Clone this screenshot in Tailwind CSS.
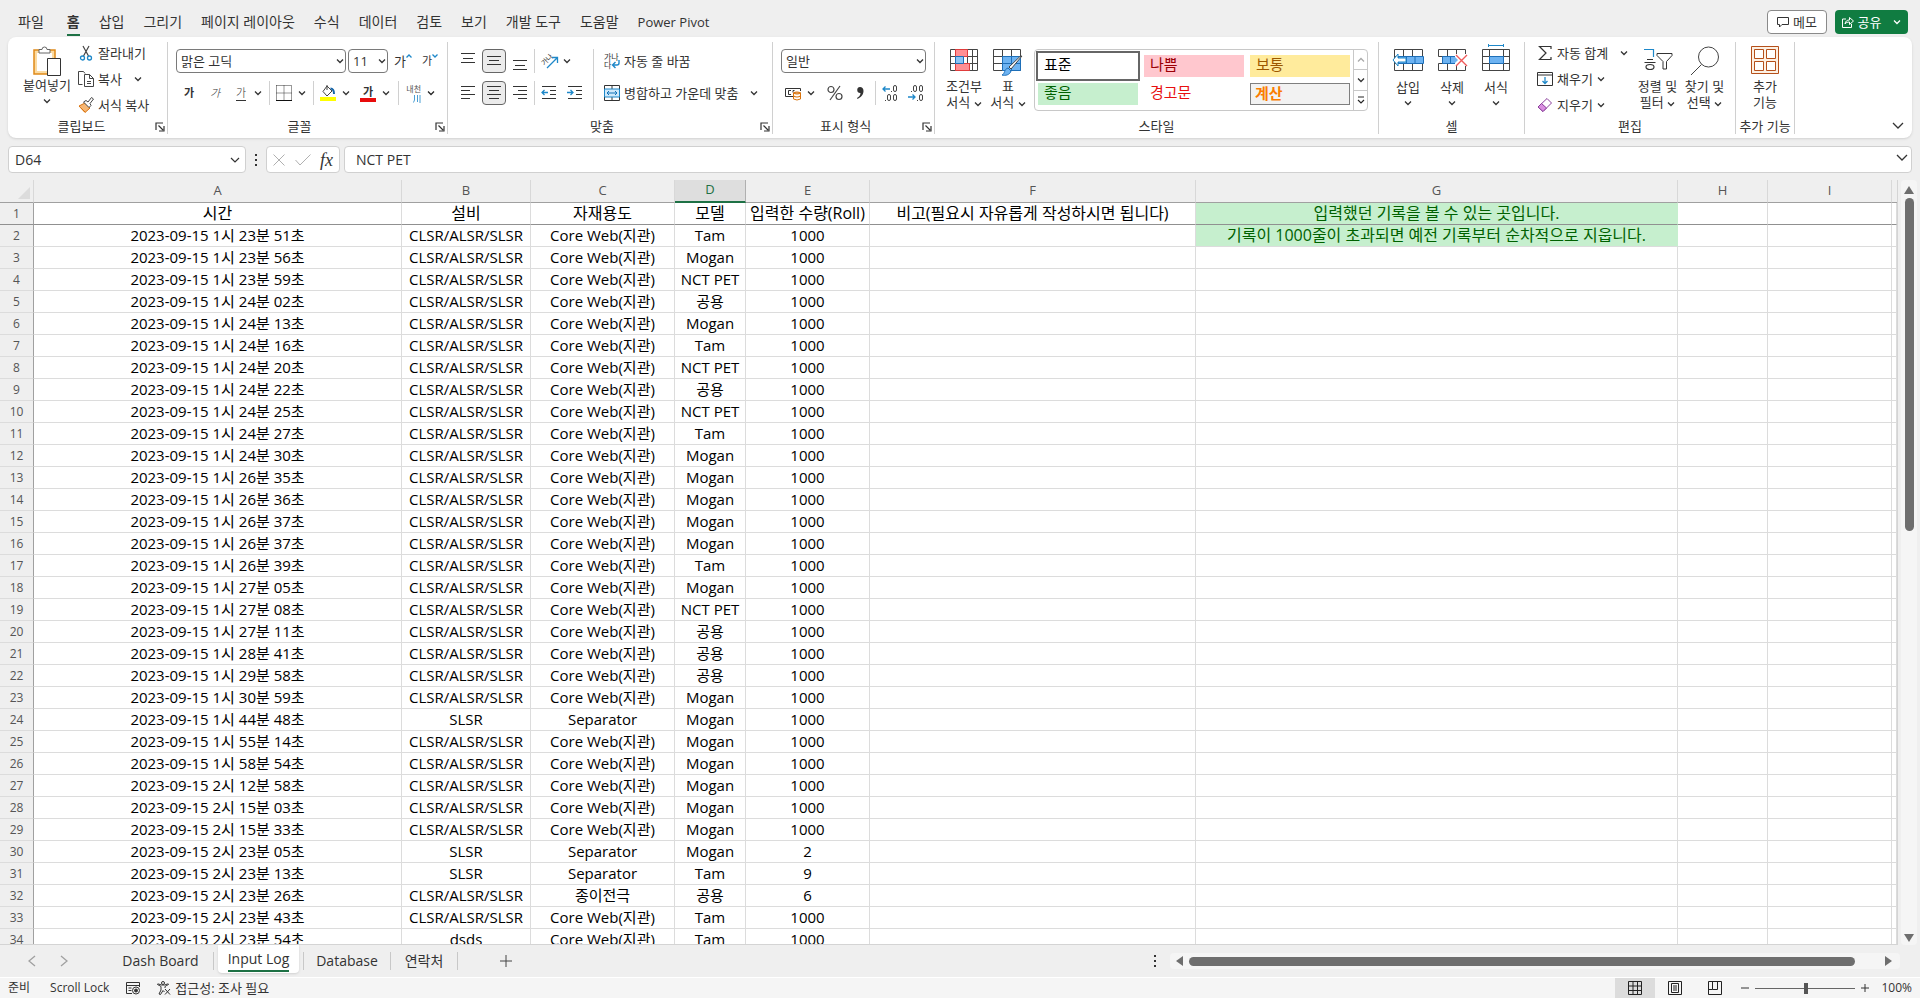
<!DOCTYPE html>
<html lang="ko">
<head>
  <meta charset="UTF-8" />
  <meta name="viewport" content="width=device-width, initial-scale=1.0"/>
  <title>Input Log</title>
  <script src="https://cdn.jsdelivr.net/npm/@tailwindcss/browser@4"></script>
</head>
<body class="h-screen flex flex-col overflow-hidden bg-[#efefef] font-['Open_Sans','Noto_Sans_CJK_KR',sans-serif] text-[13px] leading-4 text-[#333]">

  <!-- shared icons -->
  <svg class="hidden">
    <symbol id="chev" viewBox="0 0 8 8"><path d="M1 2.5l3 3 3-3" fill="none" stroke="currentColor" stroke-width="1.3"/></symbol>
    <symbol id="launch" viewBox="0 0 10 10"><path d="M1 8V1h7M3.5 3.5L8 8M9 4v5H4" fill="none" stroke="#333" stroke-width="1.2"/></symbol>
  </svg>

  <!-- menu tabs -->
  <header class="h-[37px] shrink-0 flex items-center justify-between pl-[18px] pr-3 pt-1.5">
    <nav class="flex items-center gap-[19px] text-[14px] leading-5 whitespace-nowrap">
      <a href="#">파일</a>
      <a href="#" class="relative font-semibold pl-1">홈<span class="absolute left-1 right-0 -bottom-1 h-[2px] bg-[#1e7145]"></span></a>
      <a href="#">삽입</a>
      <a href="#">그리기</a>
      <a href="#">페이지 레이아웃</a>
      <a href="#">수식</a>
      <a href="#">데이터</a>
      <a href="#">검토</a>
      <a href="#">보기</a>
      <a href="#">개발 도구</a>
      <a href="#">도움말</a>
      <a href="#" class="text-[13px]">Power Pivot</a>
    </nav>
    <div class="flex gap-2">
      <button class="h-6 w-[60px] flex items-center justify-center gap-1 rounded border border-[#8a8a8a] bg-white">
        <svg class="size-3" viewBox="0 0 12 12" fill="none" stroke="#333"><path d="M.5 1.5h11v7H5L2.5 11V8.5h-2z"/></svg>메모
      </button>
      <button class="h-6 w-[73px] flex items-center justify-center gap-1 rounded bg-[#107c41] text-white">
        <svg class="size-3" viewBox="0 0 12 12" fill="none" stroke="#fff"><path d="M4 3H.5v8.500h9V8M3 8c.5-3 2-4 4.500-4V1.500L11.500 5 7.500 8.500V6C5.500 6 4 6.500 3 8z"/></svg>공유
        <svg class="size-2 ml-2"><use href="#chev"/></svg>
      </button>
    </div>
  </header>

  <!-- ribbon -->
  <section class="mx-2 h-[101px] shrink-0 flex bg-white rounded-lg shadow-sm whitespace-nowrap pt-[5px] pb-1">

    <div class="relative w-[160px] border-r border-[#d0d0d0] flex flex-col">
      <div class="flex-1 flex pl-3">
        <button class="w-[54px] flex flex-col items-center pt-1">
          <svg class="w-[30px] h-[31px]" viewBox="0 0 30 31"><path d="M2 4h21v24H2z" fill="#fbdba2" stroke="#e08a1a" stroke-width="1.500"/><path d="M5 7h15v18H5z" fill="#fff"/><path d="M7 7V3.500h3a2.500 2.500 0 0 1 5 0h3V7z" fill="#fff" stroke="#666"/><path d="M15.500 12.500h13v17h-13z" fill="#fff" stroke="#333"/></svg>
          붙여넣기
          <svg class="size-2 mt-1"><use href="#chev"/></svg>
        </button>
        <div class="flex flex-col -mt-0.5 ml-1">
          <button class="h-[26px] flex items-center gap-1">
            <svg class="size-4" viewBox="0 0 16 16" fill="none"><path d="M5 1l5.500 10M11 1L5.500 11" stroke="#444" stroke-width="1.200"/><circle cx="4.500" cy="13" r="2" stroke="#1e88c9" stroke-width="1.300"/><circle cx="11.500" cy="13" r="2" stroke="#1e88c9" stroke-width="1.300"/></svg>잘라내기
          </button>
          <button class="h-[26px] flex items-center gap-1">
            <svg class="size-4" viewBox="0 0 16 16" fill="none" stroke="#444"><path d="M4.500 13.500h-4v-13h5l1.500 2"/><path d="M6.500 3.500h5l4 4v8h-9zM11.500 3.500v4h4M9 10.500h4M9 12.500h4"/></svg>복사
            <svg class="size-2 ml-2"><use href="#chev"/></svg>
          </button>
          <button class="h-[26px] flex items-center gap-1">
            <svg class="size-4" viewBox="0 0 16 16"><path d="M1 9l6-3 5 5-5 4.500z" fill="#f7b774" stroke="#d9730d"/><path d="M3 11l4 4" stroke="#d9730d"/><path d="M5.500 5L8 3.500l2 1.500 3.500-4.500 2 1.500-3.500 4.500 1 2-2 2z" fill="#fff" stroke="#444"/></svg>서식 복사
          </button>
        </div>
      </div>
      <div class="text-center pr-3">클립보드</div>
      <button aria-label="클립보드 옵션" class="absolute right-0.5 bottom-0.5"><svg class="size-2.5"><use href="#launch"/></svg></button>
    </div>

    <div class="relative w-[280px] border-r border-[#d0d0d0] flex flex-col">
      <div class="flex-1 flex flex-col gap-2 pl-2 pt-[7px]">
        <div class="h-6 flex items-center">
          <div class="relative w-[170px]">
            <select aria-label="글꼴" class="appearance-none w-full h-6 pl-1 rounded border border-[#7a7a7a] bg-white"><option>맑은 고딕</option></select>
            <svg class="size-2 absolute right-0.5 top-2 pointer-events-none"><use href="#chev"/></svg>
          </div>
          <div class="relative w-10 ml-0.5">
            <select aria-label="글꼴 크기" class="appearance-none w-full h-6 pl-1 rounded border border-[#7a7a7a] bg-white"><option>11</option></select>
            <svg class="size-2 absolute right-0.5 top-2 pointer-events-none"><use href="#chev"/></svg>
          </div>
          <button class="ml-1.5 flex">가<svg class="size-1.5" viewBox="0 0 6 6"><path d="M.5 4.500L3 2l2.500 2.500" fill="none" stroke="#1e88c9" stroke-width="1.300"/></svg></button>
          <button class="ml-2.5 flex text-[11px]">가<svg class="size-1.5" viewBox="0 0 6 6"><path d="M.5 1.500L3 4l2.500-2.500" fill="none" stroke="#1e88c9" stroke-width="1.300"/></svg></button>
        </div>
        <div class="h-6 flex items-center text-[11px]">
          <button class="w-[26px] font-semibold">가</button>
          <button class="w-[26px] font-light italic">가</button>
          <button class="w-[26px] font-light"><span class="border-b border-[#333]">가</span></button>
          <button aria-label="밑줄 옵션"><svg class="size-2"><use href="#chev"/></svg></button>
          <span class="w-px h-6 ml-[7px] bg-[#d0d0d0]"></span>
          <button aria-label="테두리" class="ml-1.5 flex items-center gap-1.5">
            <svg class="size-4" viewBox="0 0 16 16"><path d="M.5 .5h15v15M.5 .5v15M8 .5v15M.5 8h15" fill="none" stroke="#333" stroke-dasharray="1 1"/><path d="M0 15.500h16" stroke="#111"/></svg>
            <svg class="size-2"><use href="#chev"/></svg>
          </button>
          <span class="w-px h-6 ml-[7px] bg-[#d0d0d0]"></span>
          <button aria-label="채우기 색" class="ml-1.5 flex items-center gap-1.5">
            <svg class="w-4 h-4" viewBox="0 0 16 16"><path d="M7 1l5 5-5 5-4-4.500zM7 0v5" fill="#fff" stroke="#444"/><path d="M10.500 3.500c2.500 0 3.500 2 3.500 5.500" fill="none" stroke="#1565a8" stroke-width="2"/><path d="M0 12h16v4H0z" fill="#ff0"/></svg>
            <svg class="size-2"><use href="#chev"/></svg>
          </button>
          <button aria-label="글꼴 색" class="ml-2.5 flex items-center gap-1.5">
            <span class="w-4 leading-[13px] font-semibold border-b-4 border-[#e80c0c]">가</span>
            <svg class="size-2"><use href="#chev"/></svg>
          </button>
          <span class="w-px h-6 ml-2 bg-[#d0d0d0]"></span>
          <button aria-label="윗주" class="ml-1.5 flex items-center gap-1.5 text-[8px] leading-3 text-[#555]">
            <span class="w-4 flex flex-col items-end"><span>내천</span><svg class="w-2 h-2" viewBox="0 0 8 8"><path d="M1.500 0v5L.5 7.500M4.500 0v7M7 0v8" stroke="#4a9fd4" fill="none"/></svg></span>
            <svg class="size-2 text-[#262626]"><use href="#chev"/></svg>
          </button>
        </div>
      </div>
      <div class="text-center pr-4">글꼴</div>
      <button aria-label="글꼴 옵션" class="absolute right-0.5 bottom-0.5"><svg class="size-2.5"><use href="#launch"/></svg></button>
    </div>

    <div class="relative w-[325px] border-r border-[#d0d0d0] flex flex-col">
      <div class="flex-1 flex pl-2 pt-[7px]">
        <div class="flex flex-col gap-2 w-[137px]">
          <div class="h-6 flex items-center gap-0.5">
            <button aria-label="위쪽 맞춤" class="size-6 pl-1"><svg class="w-4 h-4" viewBox="0 0 16 16"><path d="M1 .5h14M3 5.500h10M1 9.500h14" stroke="#333"/></svg></button>
            <button aria-label="가운데 맞춤" class="size-6 flex items-center justify-center rounded border border-[#666] bg-[#ebebeb]"><svg class="w-4 h-4" viewBox="0 0 16 16"><path d="M1 3.500h14M3 7.500h10M1 11.500h14" stroke="#333"/></svg></button>
            <button aria-label="아래쪽 맞춤" class="size-6 pt-1 pl-1"><svg class="w-4 h-4" viewBox="0 0 16 16"><path d="M1 5.500h14M3 10.500h10M1 14.500h14" stroke="#333"/></svg></button>
            <span class="w-px h-6 bg-[#d0d0d0]"></span>
            <button aria-label="방향" class="ml-1 flex items-center gap-1">
              <svg class="size-[18px] overflow-visible" viewBox="0 0 18 18"><text x="0" y="12" font-size="7" fill="#333" transform="rotate(-45 4 9)">가나</text><path d="M6 16L16 6M11 5.500h5.500V11" fill="none" stroke="#1e88c9" stroke-width="1.300"/></svg>
              <svg class="size-2"><use href="#chev"/></svg>
            </button>
          </div>
          <div class="h-6 flex items-center gap-0.5">
            <button aria-label="왼쪽 맞춤" class="size-6 pl-1"><svg class="w-4 h-4" viewBox="0 0 16 16"><path d="M1 1.500h14M1 5.500h9M1 9.500h14M1 13.500h9" stroke="#333"/></svg></button>
            <button aria-label="가운데" class="size-6 flex items-center justify-center rounded border border-[#666] bg-[#ebebeb]"><svg class="w-4 h-4" viewBox="0 0 16 16"><path d="M1 1.500h14M3 5.500h10M1 9.500h14M3 13.500h10" stroke="#333"/></svg></button>
            <button aria-label="오른쪽 맞춤" class="size-6 pl-1"><svg class="w-4 h-4" viewBox="0 0 16 16"><path d="M1 1.500h14M6 5.500h9M1 9.500h14M6 13.500h9" stroke="#333"/></svg></button>
            <span class="w-px h-6 bg-[#d0d0d0]"></span>
            <button aria-label="내어쓰기" class="w-6 pl-1"><svg class="w-4 h-4" viewBox="0 0 16 16" fill="none"><path d="M1 1.500h14M9 5.500h6M9 9.500h6M1 13.500h14" stroke="#333"/><path d="M7 7.500H1M3.500 5L1 7.500 3.500 10" stroke="#1e88c9" stroke-width="1.300"/></svg></button>
            <button aria-label="들여쓰기" class="w-6 pl-1"><svg class="w-4 h-4" viewBox="0 0 16 16" fill="none"><path d="M1 1.500h14M9 5.500h6M9 9.500h6M1 13.500h14" stroke="#333"/><path d="M0 7.500h6M3.500 5L6 7.500 3.500 10" stroke="#1e88c9" stroke-width="1.300"/></svg></button>
          </div>
        </div>
        <span class="w-px h-[61px] bg-[#d0d0d0]"></span>
        <div class="flex flex-col gap-2 pl-2.5">
          <button class="h-6 flex items-center gap-1">
            <svg class="size-4 overflow-visible" viewBox="0 0 16 16"><text x="0" y="7" font-size="8" fill="#333">가나</text><text x="0" y="15" font-size="8" fill="#333">다</text><path d="M15 7v3q0 2-2 2H9M11.500 9L8.500 12l3 3" fill="none" stroke="#1e88c9" stroke-width="1.400"/></svg>자동 줄 바꿈
          </button>
          <button class="h-6 flex items-center gap-1">
            <svg class="size-4" viewBox="0 0 16 16" fill="none"><path d="M.5 .5h15v15H.5zM8 0v4M8 12v4" stroke="#333"/><path d="M.5 4h15v8H.5z" fill="#cfe8fa" stroke="#1e88c9"/><path d="M3 8h10M5 6L3 8l2 2M11 6l2 2-2 2" stroke="#1173b8"/></svg>병합하고 가운데 맞춤
            <svg class="size-2 ml-2"><use href="#chev"/></svg>
          </button>
        </div>
      </div>
      <div class="text-center pr-4">맞춤</div>
      <button aria-label="맞춤 옵션" class="absolute right-0.5 bottom-0.5"><svg class="size-2.5"><use href="#launch"/></svg></button>
    </div>

    <div class="relative w-[162px] border-r border-[#d0d0d0] flex flex-col">
      <div class="flex-1 flex flex-col gap-2 px-2 pt-[7px]">
        <div class="relative">
          <select aria-label="표시 형식" class="appearance-none w-full h-6 pl-1 rounded border border-[#7a7a7a] bg-white"><option>일반</option></select>
          <svg class="size-2 absolute right-0.5 top-2 pointer-events-none"><use href="#chev"/></svg>
        </div>
        <div class="h-6 flex items-center">
          <button aria-label="회계 표시 형식" class="ml-1 flex items-center gap-1.5">
            <svg class="w-4 h-4" viewBox="0 0 16 16" fill="none"><path d="M8 11.500H.5v-8h15V6M6 5.500H3.500v4H6M9.500 5.500H8v2" stroke="#333"/><path d="M8.500 8v6q3.500 2 7 0V8z" fill="#fff" stroke="#d9730d"/><path d="M8.500 8q3.500 2 7 0q-3.500-2-7 0M8.500 11q3.500 2 7 0" stroke="#d9730d" stroke-width="1.200"/></svg>
            <svg class="size-2"><use href="#chev"/></svg>
          </button>
          <button aria-label="백분율" class="ml-3 w-4"><svg class="size-4" viewBox="0 0 16 16" fill="none" stroke="#444" stroke-width="1.200"><circle cx="4" cy="4.500" r="3"/><circle cx="12" cy="11.500" r="3"/><path d="M13 1L3 15"/></svg></button>
          <button aria-label="쉼표" class="ml-3 w-3"><svg class="w-2.5 h-4" viewBox="0 0 10 16"><path d="M5 2a3 3 0 1 0 .5 6C5.500 10 4 12 2 13l.5 1C6 12.500 8.500 9.500 8.500 6 8.500 3.500 7 2 5 2z" fill="#333"/></svg></button>
          <span class="w-px h-6 ml-2 bg-[#d0d0d0]"></span>
          <button aria-label="자릿수 늘림" class="ml-1.5 w-4"><svg class="size-4" viewBox="0 0 16 16" fill="none" stroke="#444"><rect x="11.500" y=".5" width="3" height="6" rx="1.500"/><rect x="5.500" y="9.500" width="3" height="6" rx="1.500"/><rect x="11.500" y="9.500" width="3" height="6" rx="1.500"/><path d="M3 15.500h1M9 6.500h1"/><path d="M8 4H1M3.500 1.500L1 4l2.500 2.500" stroke="#1e88c9" stroke-width="1.300"/></svg></button>
          <button aria-label="자릿수 줄임" class="ml-2.5 w-4"><svg class="size-4" viewBox="0 0 16 16" fill="none" stroke="#444"><rect x="5.500" y=".5" width="3" height="6" rx="1.500"/><rect x="11.500" y=".5" width="3" height="6" rx="1.500"/><rect x="11.500" y="9.500" width="3" height="6" rx="1.500"/><path d="M3 6.500h1M9 15.500h1"/><path d="M0 12h7M4.500 9.500L7 12l-2.500 2.500" stroke="#1e88c9" stroke-width="1.300"/></svg></button>
        </div>
      </div>
      <div class="text-center pr-4">표시 형식</div>
      <button aria-label="표시 형식 옵션" class="absolute right-0.5 bottom-0.5"><svg class="size-2.5"><use href="#launch"/></svg></button>
    </div>

    <div class="w-[444px] border-r border-[#d0d0d0] flex flex-col">
      <div class="flex-1 flex pl-[7px] pt-[7px]">
        <button class="w-11 flex flex-col items-center">
          <svg class="w-7 h-[22px] mb-[7px]" viewBox="0 0 28 22" fill="none"><path d="M.5 .5h27v21H.5zM.5 7.500h27M.5 14.500h27M5.500 0v22M17.500 0v22M22.500 0v22" stroke="#444"/><path d="M5.500 .5h12v7h-12zM5.500 14.500h14v7h-14z" fill="#ff8f94" stroke="#e03c3c"/><path d="M5.500 7.500h8v7h-8z" fill="#8cc4f5" stroke="#1e6fb8"/></svg>
          <span>조건부<br>서식 <svg class="size-2 inline"><use href="#chev"/></svg></span>
        </button>
        <button class="w-11 flex flex-col items-center">
          <svg class="w-[30px] h-[27px] mb-0.5" viewBox="0 0 30 27" fill="none"><path d="M.5 .5h27v21H.5zM.5 7.500h27M.5 14.500h27M9.500 0v22M18.500 0v22" stroke="#444"/><path d="M9.500 7.500h18v14h-18z" fill="#6db3f2" stroke="#1e6fb8"/><path d="M9.500 14.500h18M18.500 7.500v14" stroke="#1e6fb8"/><path d="M29 7L18 20l-2-2L27 7.500z" fill="#fff" stroke="#444"/><path d="M9 26c3-1 2-6 6-7l3 3c-1 4-6 5-9 4z" fill="#6db3f2" stroke="#1e6fb8"/></svg>
          <span>표<br>서식 <svg class="size-2 inline"><use href="#chev"/></svg></span>
        </button>
        <div class="ml-1 h-[62px] flex rounded border border-[#c8c8c8]">
          <div class="grid grid-cols-3 grid-rows-2 w-[318px] py-[2px] text-[15px] leading-[18px]">
            <button class="mx-px -my-px border-2 border-[#666] pl-1.5 pb-1 text-left text-black">표준</button>
            <button class="m-[3px] bg-[#ffc7ce] pl-1.5 pb-1 text-left text-[#9c0006]">나쁨</button>
            <button class="m-[3px] bg-[#ffeb9c] pl-1.5 pb-1 text-left text-[#9c5700]">보통</button>
            <button class="m-[3px] bg-[#c6efce] pl-1.5 pb-1 text-left text-[#006100]">좋음</button>
            <button class="m-[3px] pl-1.5 pb-1 text-left text-[#e81010]">경고문</button>
            <button class="m-[3px] border border-[#7f7f7f] bg-[#f2f2f2] pl-1 pb-1 text-left font-semibold text-[#fa7d00]">계산</button>
          </div>
          <div class="w-[14px] flex flex-col border-l border-[#c8c8c8]">
            <button aria-label="위로" class="flex-1 flex items-center justify-center border-b border-[#c8c8c8] text-[#aaa]"><svg class="size-2 rotate-180"><use href="#chev"/></svg></button>
            <button aria-label="아래로" class="flex-1 flex items-center justify-center border-b border-[#c8c8c8]"><svg class="size-2"><use href="#chev"/></svg></button>
            <button aria-label="자세히" class="flex-1 flex items-center justify-center"><svg class="size-2" viewBox="0 0 8 8"><path d="M1 1h6M1 4l3 3 3-3" fill="none" stroke="#262626" stroke-width="1.200"/></svg></button>
          </div>
        </div>
      </div>
      <div class="text-center">스타일</div>
    </div>

    <div class="w-[146px] border-r border-[#d0d0d0] flex flex-col">
      <div class="flex-1 flex pl-[7px] pt-0.5">
        <button class="w-11 flex flex-col items-center">
          <svg class="w-8 h-7 mb-[7px]" viewBox="0 0 32 28" fill="none"><path d="M2.500 5.500h28v21h-28zM2.500 12.500h28M2.500 19.500h28M11.500 5v22M20.500 5v22" stroke="#444"/><path d="M6.500 12.500h25v7h-25z" fill="#6db3f2" stroke="#1e6fb8"/><path d="M14.500 12.500v7M23 12.500v7" stroke="#1e6fb8"/><path d="M6 10l-5 6 5 6v-4h8v-4H6z" fill="#fff" stroke="#1e88c9"/></svg>
          삽입<svg class="size-2 mt-1"><use href="#chev"/></svg>
        </button>
        <button class="w-11 flex flex-col items-center">
          <svg class="w-8 h-7 mb-[7px]" viewBox="0 0 32 28" fill="none"><path d="M2.500 12.500v-7h27v7M2.500 19.500v7h27v-7M2.500 12.500h27M2.500 19.500h27M11.500 5v7M20.500 5v7M11.500 20v7M20.500 20v7" stroke="#444"/><path d="M6.500 12.500h14l3 3.500-3 3.500h-14zM14.500 12.500v7" fill="#6db3f2" stroke="#1e6fb8"/><path d="M19 10h12v12H19z" fill="#fff"/><path d="M15 13h4l3 3-3 3h-4z" fill="#6db3f2"/><path d="M20 11l11 11M31 11L20 22" stroke="#f05a5a" stroke-width="1.400"/></svg>
          삭제<svg class="size-2 mt-1"><use href="#chev"/></svg>
        </button>
        <button class="w-11 flex flex-col items-center">
          <svg class="w-8 h-7 mb-[7px]" viewBox="0 0 32 28" fill="none"><path d="M2.500 5.500h27v21h-27zM2.500 12.500h27M2.500 19.500h27M9.500 5v22M23.500 5v22" stroke="#444"/><path d="M9.500 12.500h14v7h-14z" fill="#6db3f2" stroke="#1e6fb8"/><path d="M8.500 0v3M23.500 0v3M8.500 1.500h15" stroke="#1e88c9"/></svg>
          서식<svg class="size-2 mt-1"><use href="#chev"/></svg>
        </button>
      </div>
      <div class="text-center">셀</div>
    </div>

    <div class="w-[211px] border-r border-[#d0d0d0] flex flex-col">
      <div class="flex-1 flex pl-3">
        <div class="flex flex-col -mt-0.5 w-[97px]">
          <button class="h-[26px] flex items-center gap-1">
            <svg class="size-4" viewBox="0 0 16 16"><path d="M14 4V1.500H2.500L9 8l-6.500 6.500H14V12" fill="none" stroke="#333" stroke-width="1.200"/></svg>자동 합계
            <svg class="size-2 ml-2"><use href="#chev"/></svg>
          </button>
          <button class="h-[26px] flex items-center gap-1">
            <svg class="size-4" viewBox="0 0 16 16" fill="none"><path d="M.5 1.500h15v13H.5zM.5 4h15" stroke="#333"/><path d="M8 6v6.500M5.500 10L8 12.500 10.500 10" stroke="#1e88c9" stroke-width="1.300"/></svg>채우기
            <svg class="size-2"><use href="#chev"/></svg>
          </button>
          <button class="h-[26px] flex items-center gap-1">
            <svg class="size-4" viewBox="0 0 16 16"><path d="M10 1.500l4.500 4.500-8.500 8.500-5-4.500z" fill="#fff" stroke="#8b3f9b"/><path d="M4.500 6.500l5 4.500-3.500 3.500-5-4.500z" fill="#d98fe0" stroke="#8b3f9b"/></svg>지우기
            <svg class="size-2"><use href="#chev"/></svg>
          </button>
        </div>
        <button class="w-[47px] flex flex-col items-center pt-[5px]">
          <svg class="w-[30px] h-6 mb-[7px]" viewBox="0 0 30 24" fill="none"><path d="M1 2.500h9.500V10" stroke="#1e88c9" stroke-width="1.200"/><path d="M4 12.500h6M1.500 15.500h11" stroke="#333" stroke-width="1.200"/><ellipse cx="7" cy="20" rx="4" ry="2.500" stroke="#333" stroke-width="1.200"/><path d="M14 6.500h15v2l-5.500 6V22H20v-7.500L14 8.500z" stroke="#333"/></svg>
          <span>정렬 및<br>필터 <svg class="size-2 inline"><use href="#chev"/></svg></span>
        </button>
        <button class="w-[47px] flex flex-col items-center pt-1">
          <svg class="w-[30px] h-[30px] mb-0.5" viewBox="0 0 30 30" fill="none" stroke="#444"><circle cx="18.500" cy="11" r="10"/><path d="M11.500 18.500L1 29"/></svg>
          <span>찾기 및<br>선택 <svg class="size-2 inline"><use href="#chev"/></svg></span>
        </button>
      </div>
      <div class="text-center">편집</div>
    </div>

    <div class="w-[59px] border-r border-[#d0d0d0] flex flex-col">
      <button class="flex-1 flex flex-col items-center pt-1">
        <svg class="size-7 mb-1" viewBox="0 0 28 28" stroke="#b5501b" fill="none"><path d="M.5 .5h27v27H.5z" fill="#fdf1e4"/><path d="M3.500 3.500h9v9h-9zM15.500 3.500h9v9h-9zM3.500 15.500h9v9h-9zM15.500 15.500h9v9h-9z" fill="#fff"/></svg>
        <span>추가<br>기능</span>
      </button>
      <div class="text-center">추가 기능</div>
    </div>

    <button aria-label="리본 축소" class="ml-auto mr-2 self-end mb-1"><svg class="w-3 h-2" viewBox="0 0 12 8"><path d="M1 1l5 5 5-5" fill="none" stroke="#333" stroke-width="1.300"/></svg></button>
  </section>

  <!-- formula bar -->
  <section class="h-[42px] shrink-0 px-2 pt-2 pb-[7px] flex">
    <div class="relative w-[238px]">
      <input aria-label="이름 상자" value="D64" class="w-full h-[27px] pl-1.5 rounded border border-[#d0d0d0] bg-white text-[14px]">
      <svg class="w-2.5 h-2 absolute right-1.5 top-2.5" viewBox="0 0 10 8"><path d="M1 2l4 4 4-4" fill="none" stroke="#333" stroke-width="1.200"/></svg>
    </div>
    <div class="w-5 flex flex-col items-center justify-center gap-[3px]"><i class="size-0.5 bg-[#333]"></i><i class="size-0.5 bg-[#333]"></i><i class="size-0.5 bg-[#333]"></i></div>
    <div class="w-[74px] h-[27px] flex items-center justify-between px-1.5 rounded border border-[#d0d0d0] bg-white">
      <button aria-label="취소"><svg class="w-3 h-3" viewBox="0 0 12 12"><path d="M.5 .5l11 11M11.500 .5l-11 11" stroke="#b0b0b0"/></svg></button>
      <button aria-label="입력"><svg class="w-4 h-3" viewBox="0 0 16 12"><path d="M.5 6L5 11 15.500 .5" fill="none" stroke="#b0b0b0"/></svg></button>
      <button class="font-['Liberation_Serif',serif] italic text-[18px]">fx</button>
    </div>
    <div class="relative flex-1 ml-1">
      <input aria-label="수식 입력줄" value="NCT PET" class="w-full h-[27px] pl-[11px] rounded border border-[#d0d0d0] bg-white text-[14px]">
      <svg class="w-3 h-2 absolute right-1 top-2" viewBox="0 0 12 8"><path d="M1 1l5 5 5-5" fill="none" stroke="#333" stroke-width="1.300"/></svg>
    </div>
  </section>

  <!-- sheet -->
  <main class="flex-1 min-h-0 flex">
    <div class="flex-1 min-w-0 overflow-hidden border-b border-r border-[#d4d4d4]">
      <table class="w-full table-fixed border-separate border-spacing-0 text-center text-black whitespace-nowrap">
        <colgroup>
          <col class="w-[34px]"><col class="w-[368px]"><col class="w-[129px]"><col class="w-[144px]"><col class="w-[71px]"><col class="w-[124px]"><col class="w-[326px]"><col class="w-[482px]"><col class="w-[90px]"><col class="w-[124px]"><col>
        </colgroup>
        <thead>
          <tr class="h-[23px] text-[13px] text-[#555]">
            <th class="border-b border-r border-[#a0a0a0] border-r-[#d8d8d8] p-0"><svg class="size-3 ml-[18px] mt-1" viewBox="0 0 12 12"><path d="M12 0v12H0z" fill="#dcdcdc"/></svg></th>
            <th class="font-normal border-b border-r border-[#a0a0a0] border-r-[#d8d8d8] p-0 pb-[3px]">A</th>
            <th class="font-normal border-b border-r border-[#a0a0a0] border-r-[#d8d8d8] p-0 pb-[3px]">B</th>
            <th class="font-normal border-b border-r border-[#a0a0a0] border-r-[#d8d8d8] p-0 pb-[3px]">C</th>
            <th class="font-normal border-b-2 border-r border-[#1e7145] border-r-[#b0b0b0] bg-[#dedede] text-[#1e7145] p-0 pb-[3px]">D</th>
            <th class="font-normal border-b border-r border-[#a0a0a0] border-r-[#d8d8d8] p-0 pb-[3px]">E</th>
            <th class="font-normal border-b border-r border-[#a0a0a0] border-r-[#d8d8d8] p-0 pb-[3px]">F</th>
            <th class="font-normal border-b border-r border-[#a0a0a0] border-r-[#d8d8d8] p-0 pb-[3px]">G</th>
            <th class="font-normal border-b border-r border-[#a0a0a0] border-r-[#d8d8d8] p-0 pb-[3px]">H</th>
            <th class="font-normal border-b border-r border-[#a0a0a0] border-r-[#d8d8d8] p-0 pb-[3px]">I</th>
            <th class="border-b border-[#a0a0a0] p-0"></th>
          </tr>
        </thead>
        <tbody id="rows"></tbody>
      </table>
    </div>
    <div class="w-[22px] flex justify-center">
      <div class="w-4 flex flex-col items-center bg-[#f5f5f5] rounded pt-1.5 pb-[3px]">
        <svg class="w-2.5 h-2" viewBox="0 0 10 8"><path d="M5 0l5 8H0z" fill="#6e6e6e"/></svg>
        <div class="w-[9px] h-[44%] mt-1 rounded-full bg-[#6e6e6e]"></div>
        <svg class="w-2.5 h-2 mt-auto" viewBox="0 0 10 8"><path d="M5 8L0 0h10z" fill="#6e6e6e"/></svg>
      </div>
    </div>
  </main>

  <!-- sheet tabs -->
  <footer class="h-8 shrink-0 flex items-center text-[14px]">
    <button aria-label="이전 시트" class="ml-7"><svg class="w-2 h-3" viewBox="0 0 8 12"><path d="M7 1L1 6l6 5" fill="none" stroke="#a0a0a0" stroke-width="1.300"/></svg></button>
    <button aria-label="다음 시트" class="ml-6"><svg class="w-2 h-3" viewBox="0 0 8 12"><path d="M1 1l6 5-6 5" fill="none" stroke="#a0a0a0" stroke-width="1.300"/></svg></button>
    <button class="w-[146px] h-[18px] pl-10 border-r border-[#c8c8c8]">Dash Board</button>
    <button class="w-[81px] h-7 mx-1 self-start rounded-b bg-white shadow-sm"><span class="border-b-2 border-[#1e7145] pb-0.5">Input Log</span></button>
    <button class="w-[88px] h-[18px] border-x border-[#c8c8c8]">Database</button>
    <button class="w-[67px] h-[18px] border-r border-[#c8c8c8]">연락처</button>
    <button aria-label="새 시트" class="ml-[42px]"><svg class="size-3" viewBox="0 0 12 12"><path d="M6 0v12M0 6h12" stroke="#444"/></svg></button>
    <div class="ml-auto flex flex-col gap-[3px]"><i class="size-0.5 bg-[#333]"></i><i class="size-0.5 bg-[#333]"></i><i class="size-0.5 bg-[#333]"></i></div>
    <div class="w-[38%] h-4 ml-3.5 mr-5 pl-1.5 pr-2 flex items-center bg-[#f5f5f5] rounded">
      <svg class="w-[7px] h-2.5" viewBox="0 0 7 10"><path d="M7 0v10L0 5z" fill="#6e6e6e"/></svg>
      <div class="w-[93%] h-[9px] ml-1.5 rounded-full bg-[#6e6e6e]"></div>
      <svg class="w-[7px] h-2.5 ml-auto" viewBox="0 0 7 10"><path d="M0 0v10l7-5z" fill="#6e6e6e"/></svg>
    </div>
  </footer>

  <!-- status bar -->
  <footer class="h-[21px] shrink-0 flex items-center pl-2 pr-2 bg-[#f5f5f5] border-t border-white text-[12px]">
    <span>준비</span>
    <span class="ml-5">Scroll Lock</span>
    <svg class="w-3.5 h-3.5 ml-[17px]" viewBox="0 0 14 14" fill="none" stroke="#333"><path d="M6 12.500H.5V1.500h13V6M.5 4.500h13M2.500 7h3M2.500 9.500h3"/><circle cx="10" cy="9.500" r="3.500"/><circle cx="10" cy="9.500" r="1.500" fill="#333"/></svg>
    <svg class="w-3.5 h-3.5 ml-[17px] mr-1" viewBox="0 0 14 14" fill="none" stroke="#333"><circle cx="6" cy="2" r="1.500"/><path d="M.5 3.500q3 1.500 3.500 2V9L2 13l1.500.5 2.500-4 1.500 1.500M11.500 3.500q-3 1.500-3.500 2V7M.5 3.500q0-1 1-.5l3 1h3l3-1q1-.5 1 .5M8 8l5 5.500M13 8l-5 5.500"/></svg>
    <span class="text-[13px]">접근성: 조사 필요</span>
    <button aria-label="기본" class="ml-auto w-[40px] h-5 flex items-center justify-center bg-[#dcdcdc]"><svg class="size-3.5" viewBox="0 0 14 14"><path d="M.5 .5h13v13H.5zM5 0v14M9.500 0v14M0 5h14M0 9.500h14" fill="none" stroke="#222"/></svg></button>
    <button aria-label="페이지 레이아웃" class="w-[40px] flex justify-center"><svg class="size-3.5" viewBox="0 0 14 14"><path d="M.5 .5h13v13H.5zM3.500 2.500h7v9h-7zM5 5h4M5 7h4M5 9h4" fill="none" stroke="#222"/></svg></button>
    <button aria-label="페이지 나누기" class="w-[40px] flex justify-center"><svg class="size-3.5" viewBox="0 0 14 14"><path d="M.5 .5h13v13H.5zM4.500 0v8.500h5V0M.5 8.500h4" fill="none" stroke="#222"/></svg></button>
    <button aria-label="축소" class="ml-1.5"><svg class="w-2 h-2" viewBox="0 0 8 8"><path d="M0 4h8" stroke="#333"/></svg></button>
    <input type="range" aria-label="확대/축소" value="51" class="appearance-none w-[100px] h-px mx-1.5 bg-[#666] [&::-webkit-slider-thumb]:appearance-none [&::-webkit-slider-thumb]:w-1 [&::-webkit-slider-thumb]:h-[11px] [&::-webkit-slider-thumb]:bg-[#555]">
    <button aria-label="확대"><svg class="w-2 h-2" viewBox="0 0 8 8"><path d="M0 4h8M4 0v8" stroke="#333"/></svg></button>
    <span class="ml-3">100%</span>
  </footer>

  <script>
    const all = 'CLSR/ALSR/SLSR';
    const core = 'Core Web(지관)';
    const log = [
      ['1시 23분 51초', all, core, 'Tam', 1000],
      ['1시 23분 56초', all, core, 'Mogan', 1000],
      ['1시 23분 59초', all, core, 'NCT PET', 1000],
      ['1시 24분 02초', all, core, '공용', 1000],
      ['1시 24분 13초', all, core, 'Mogan', 1000],
      ['1시 24분 16초', all, core, 'Tam', 1000],
      ['1시 24분 20초', all, core, 'NCT PET', 1000],
      ['1시 24분 22초', all, core, '공용', 1000],
      ['1시 24분 25초', all, core, 'NCT PET', 1000],
      ['1시 24분 27초', all, core, 'Tam', 1000],
      ['1시 24분 30초', all, core, 'Mogan', 1000],
      ['1시 26분 35초', all, core, 'Mogan', 1000],
      ['1시 26분 36초', all, core, 'Mogan', 1000],
      ['1시 26분 37초', all, core, 'Mogan', 1000],
      ['1시 26분 37초', all, core, 'Mogan', 1000],
      ['1시 26분 39초', all, core, 'Tam', 1000],
      ['1시 27분 05초', all, core, 'Mogan', 1000],
      ['1시 27분 08초', all, core, 'NCT PET', 1000],
      ['1시 27분 11초', all, core, '공용', 1000],
      ['1시 28분 41초', all, core, '공용', 1000],
      ['1시 29분 58초', all, core, '공용', 1000],
      ['1시 30분 59초', all, core, 'Mogan', 1000],
      ['1시 44분 48초', 'SLSR', 'Separator', 'Mogan', 1000],
      ['1시 55분 14초', all, core, 'Mogan', 1000],
      ['1시 58분 54초', all, core, 'Mogan', 1000],
      ['2시 12분 58초', all, core, 'Mogan', 1000],
      ['2시 15분 03초', all, core, 'Mogan', 1000],
      ['2시 15분 33초', all, core, 'Mogan', 1000],
      ['2시 23분 05초', 'SLSR', 'Separator', 'Mogan', 2],
      ['2시 23분 13초', 'SLSR', 'Separator', 'Tam', 9],
      ['2시 23분 26초', all, '종이전극', '공용', 6],
      ['2시 23분 43초', all, core, 'Tam', 1000],
      ['2시 23분 54초', 'dsds', core, 'Tam', 1000],
    ];

    const rows = [['시간', '설비', '자재용도', '모델', '입력한 수량(Roll)', '비고(필요시 자유롭게 작성하시면 됩니다)', '입력했던 기록을 볼 수 있는 곳입니다.', '', '', '']];
    log.forEach(([time, ...rest], i) => {
      const note = i === 0 ? '기록이 1000줄이 초과되면 예전 기록부터 순차적으로 지웁니다.' : '';
      rows.push(['2023-09-15 ' + time, ...rest, '', note, '', '', '']);
    });

    document.getElementById('rows').innerHTML = rows.map((row, r) => {
      const line = r === 0 ? 'border-b-[#909090]' : 'border-b-[#dcdcdc]';
      const cells = row.map((text, c) => {
        const fill = c === 6 && r < 2 ? 'bg-[#c6efce] text-[#006100] border-r-[#c6efce]' : 'bg-white border-r-[#dcdcdc]';
        const size = r === 0 || c === 6 ? 'text-[16px]' : 'text-[15px]';
        return `<td class="p-0 pb-px border-b border-r leading-5 ${size} ${line} ${fill}">${text}</td>`;
      }).join('');
      return `<tr class="h-[22px]"><th class="p-0 font-normal text-[12px] text-[#555] border-b border-r border-r-[#a0a0a0] ${line}">${r + 1}</th>${cells}</tr>`;
    }).join('');
  </script>
</body>
</html>
